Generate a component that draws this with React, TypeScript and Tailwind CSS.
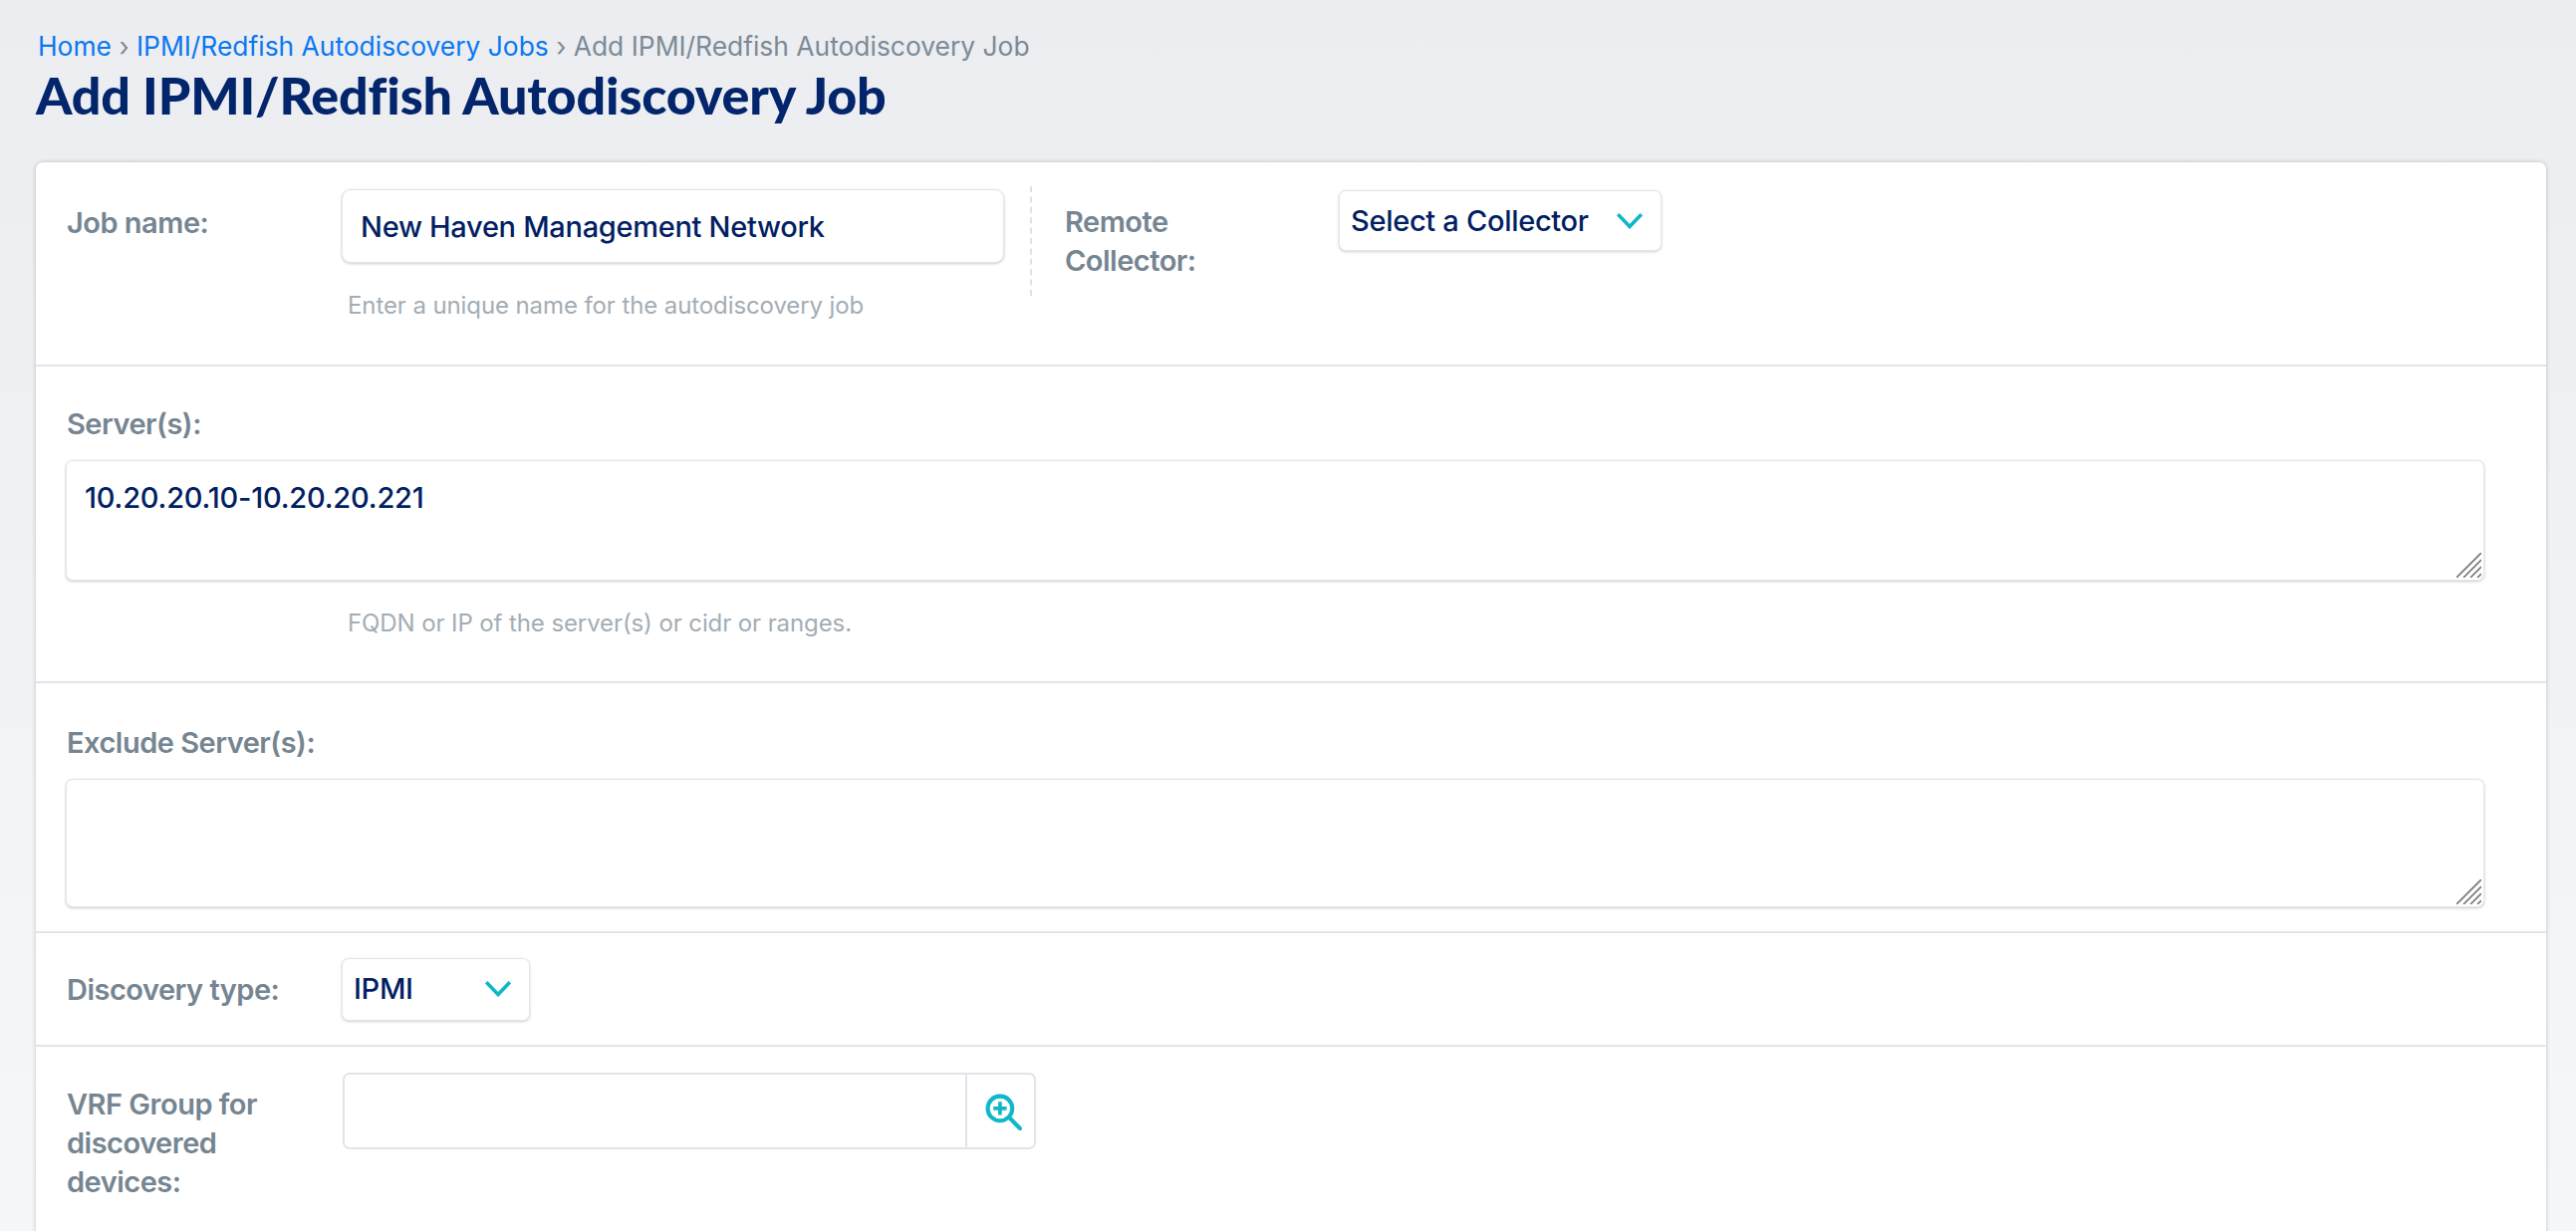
import React from "react";

function FieldLabel({ children, className = "" }: { children: React.ReactNode; className?: string }) {
  return (
    <label className={`block text-[29px] leading-[39px] font-semibold tracking-[-0.5px] text-[#758592] ${className}`}>
      {children}
    </label>
  );
}

function Hint({ children }: { children: React.ReactNode }) {
  return <p className="text-[24px] leading-[30px] tracking-[-0.1px] text-[#a3adb5]">{children}</p>;
}

function Chevron() {
  return (
    <svg viewBox="0 0 26 16" className="h-[16px] w-[26px]" fill="none" stroke="#0fb8c8" strokeWidth="3.6">
      <path d="M1.2 1.2L13 13.5 24.8 1.2" />
    </svg>
  );
}

function SelectBox({ value, className }: { value: string; className: string }) {
  return (
    <div
      className={`flex items-center justify-between rounded-[7px] border border-[#e2e5e9] bg-white pl-[11px] pr-[18px] text-[29px] font-medium tracking-[-0.3px] text-[#031f63] shadow-[0_1px_3px_rgba(0,0,0,0.18)] ${className}`}
    >
      <span>{value}</span>
      <Chevron />
    </div>
  );
}

function ServerArea({ value, height }: { value?: string; height: string }) {
  return (
    <div className="relative w-[2428px]">
      <textarea
        readOnly
        value={value ?? ""}
        className={`block w-full resize-none rounded-[7px] border border-[#e2e5e9] bg-white px-[18px] pb-[14px] pt-[17px] text-[29px] leading-[39px] font-medium tracking-[-0.2px] text-[#031f63] shadow-[0_1px_3px_rgba(0,0,0,0.2)] outline-none ${height}`}
      />
      <svg viewBox="0 0 25 25" className="absolute bottom-[3px] right-[3px] h-[25px] w-[25px]" stroke="#777" strokeWidth="1.7">
        <path d="M0 25L25 0M7 25L25 7M14 25L25 14M21 25L25 21" />
      </svg>
    </div>
  );
}

export default function App() {
  return (
    <div className="h-[1236px] overflow-hidden bg-gradient-to-b from-[#ecedf1] to-[#f6f7f9] px-[36px] pt-[29px] font-['Inter',sans-serif]">
      <nav className="ml-[2px] text-[26.4px] leading-[34px] text-[#7c8a96]">
        <a className="text-[#0a78f0]">Home</a> › <a className="text-[#0a78f0]">IPMI/Redfish Autodiscovery Jobs</a> › Add
        IPMI/Redfish Autodiscovery Job
      </nav>
      <h1 className="mt-[1px] font-['Lato',sans-serif] text-[52px] leading-[62px] font-black tracking-[-0.15px] text-[#03256c]">
        Add IPMI/Redfish Autodiscovery Job
      </h1>

      <div className="mt-[37px] w-[2520px] rounded-[7px] bg-white shadow-[0_0_4px_rgba(0,0,0,0.22)]">
        {/* job name + collector */}
        <section className="flex h-[205px] border-b-2 border-[#e1e5ea] pl-[31px] pt-[24px]">
          <div className="w-[276px] pt-[17px]">
            <FieldLabel>Job name:</FieldLabel>
          </div>
          <div className="w-[691px] pt-[3px]">
            <input
              readOnly
              value="New Haven Management Network"
              className="block h-[74px] w-[665px] rounded-[9px] border border-[#e2e5e9] bg-white px-[18px] text-[29px] font-medium tracking-[-0.3px] text-[#031f63] shadow-[0_1px_3px_rgba(0,0,0,0.2)] outline-none"
            />
            <div className="ml-[6px] mt-[28px]">
              <Hint>Enter a unique name for the autodiscovery job</Hint>
            </div>
          </div>
          <div className="flex h-[110px] border-l-2 border-dashed border-[#dfe3e7] pl-[33px]">
            <div className="w-[275px] pt-[16px]">
              <FieldLabel>
                Remote
                <br />
                Collector:
              </FieldLabel>
            </div>
            <div className="pt-[4px]">
              <SelectBox value="Select a Collector" className="h-[61px] w-[324px]" />
            </div>
          </div>
        </section>

        {/* servers */}
        <section className="h-[318px] border-b-2 border-[#e1e5ea] pl-[30px] pt-[38px]">
          <FieldLabel className="ml-[1px]">Server(s):</FieldLabel>
          <div className="mt-[17px]">
            <ServerArea value="10.20.20.10-10.20.20.221" height="h-[121px]" />
          </div>
          <div className="ml-[283px] mt-[28px]">
            <Hint>FQDN or IP of the server(s) or cidr or ranges.</Hint>
          </div>
        </section>

        {/* excluded */}
        <section className="h-[251px] border-b-2 border-[#e1e5ea] pl-[30px] pt-[40px]">
          <FieldLabel className="ml-[1px]">Exclude Server(s):</FieldLabel>
          <div className="mt-[17px]">
            <ServerArea height="h-[129px]" />
          </div>
        </section>

        {/* discovery type */}
        <section className="flex h-[114px] items-center border-b-2 border-[#e1e5ea] pl-[31px]">
          <div className="w-[276px]">
            <FieldLabel>Discovery type:</FieldLabel>
          </div>
          <SelectBox value="IPMI" className="h-[63px] w-[189px]" />
        </section>

        {/* vrf group */}
        <section className="flex h-[300px] pl-[31px] pt-[26px]">
          <div className="w-[277px] pt-[12px]">
            <FieldLabel>
              VRF Group for
              <br />
              discovered
              <br />
              devices:
            </FieldLabel>
          </div>
          <div className="flex h-[77px] w-[696px] rounded-[7px] border-2 border-[#e1e5ea] bg-white">
            <div className="flex-1" />
            <div className="flex w-[69px] items-center justify-center border-l-2 border-[#e1e5ea] pl-[6px] pt-[2px]">
              <svg viewBox="0 0 36 36" className="h-[37px] w-[37px]" fill="none" stroke="#0fb8c8" strokeWidth="4">
                <circle cx="14.5" cy="14.5" r="12" />
                <path d="M14.5 8v13M8 14.5h13" strokeWidth="3.6" />
                <path d="M24 24l10 10" strokeLinecap="round" />
              </svg>
            </div>
          </div>
        </section>
      </div>
    </div>
  );
}
